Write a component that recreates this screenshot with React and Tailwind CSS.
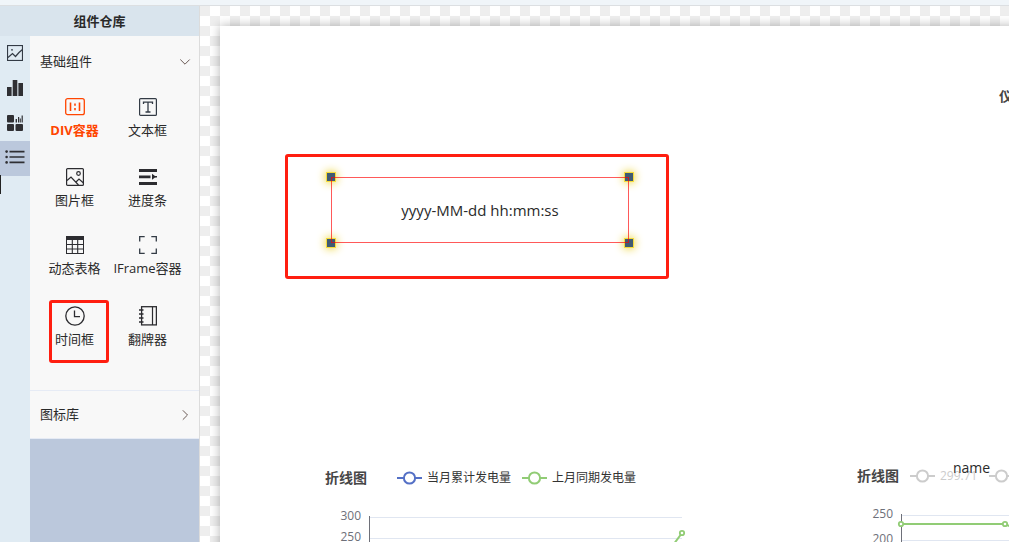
// src/App.jsx
import { useState } from "react";
import clsx from "clsx";

/* ---------- rail icons ---------- */
const PictureIcon = () => (
    <svg width="16" height="16" viewBox="0 0 16 16" fill="none" stroke="#333b45">
        <rect x="0.5" y="0.5" width="15" height="15" strokeWidth="1.2" />
        <circle cx="5" cy="4.8" r="0.9" fill="#333b45" stroke="none" />
        <path d="M1 12.5l4.5-4 3 3 3.5-4 3.5-3" strokeWidth="1.2" />
    </svg>
);

const BarsIcon = () => (
    <svg width="16" height="16" viewBox="0 0 16 16" fill="#2f2f33">
        <rect x="0" y="7" width="4.6" height="9" />
        <rect x="5.7" y="0" width="4.6" height="16" />
        <rect x="11.4" y="3" width="4.6" height="13" />
    </svg>
);

const BlocksIcon = () => (
    <svg width="16" height="16" viewBox="0 0 16 16" fill="#2f2f33">
        <rect x="0" y="0" width="7" height="7.5" rx="1" />
        <rect x="0" y="9" width="7" height="7" rx="1" />
        <rect x="8.5" y="9" width="7.5" height="7" rx="1" />
        <path d="M8.6 4h1.4v3.5H8.6zM11 2h1.2v5.5H11zM12.8 3.4h1v4.1h-1zM14.6 0.6h1.2v6.9h-1.2z" />
    </svg>
);

const ListIcon = () => (
    <svg width="20" height="14" viewBox="0 0 20 14" fill="#2f2f33">
        <circle cx="1.6" cy="1.6" r="1.3" />
        <circle cx="1.6" cy="7" r="1.3" />
        <circle cx="1.6" cy="12.4" r="1.3" />
        <path d="M4.5 0.8h15v1.6h-15zM4.5 6.2h15v1.6h-15zM4.5 11.6h15v1.6h-15z" />
    </svg>
);

/* ---------- component icons ---------- */
const DivIcon = () => (
    <svg width="20" height="18" viewBox="0 0 20 18" fill="none" stroke="#ff4500">
        <rect x="0.7" y="0.7" width="18.6" height="16" rx="2" strokeWidth="1.3" />
        <path d="M5.5 4.5v8.5M14.5 4.5v8.5" strokeWidth="1.6" />
        <path d="M10 5.5v2.2M10 10v2.2" strokeWidth="1.6" />
    </svg>
);

const TextIcon = () => (
    <svg width="18" height="18" viewBox="0 0 18 18" fill="none" stroke="#333b45">
        <rect x="0.6" y="0.6" width="16.8" height="16.8" rx="1" strokeWidth="1.2" />
        <path d="M4.5 6V4.2h9V6M9 4.2v9.6M6.5 14h5" strokeWidth="1.3" />
    </svg>
);

const ImageIcon = () => (
    <svg width="18" height="18" viewBox="0 0 18 18" fill="none" stroke="#2c2c30" strokeWidth="1.2">
        <rect x="0.6" y="0.6" width="16.8" height="16.8" rx="1" />
        <circle cx="12.5" cy="5.5" r="1.8" />
        <path d="M1 12.5l4-3.5 7.5 8M10 14l3-3 4.5 4" />
    </svg>
);

const ProgressIcon = () => (
    <svg width="18" height="16" viewBox="0 0 18 16" fill="#2c2c30">
        <path d="M0 0h18v3H0zM0 6.5h11.5v2.7H0zM0 13h18v3H0zM13 4.8l4 3-4 3z" />
        <path d="M16 7h2v1.6h-2z" />
    </svg>
);

const TableIcon = () => (
    <svg width="18" height="18" viewBox="0 0 18 18" fill="none" stroke="#2c2c30">
        <rect x="0.5" y="0.5" width="17" height="17" />
        <path d="M0 2h18" strokeWidth="4" />
        <path d="M6.3 4v14M11.7 4v14M0 8.5h18M0 13h18" strokeWidth="1.1" />
    </svg>
);

const FrameIcon = () => (
    <svg width="18" height="18" viewBox="0 0 18 18" fill="none" stroke="#333b45" strokeWidth="1.3">
        <path d="M0.7 5.5V0.7h5M12.3 0.7h5v4.8M17.3 12.5v4.8h-5M5.7 17.3h-5v-4.8" />
    </svg>
);

const ClockIcon = () => (
    <svg width="20" height="20" viewBox="0 0 20 20" fill="none" stroke="#2c2c30" strokeWidth="1.3">
        <circle cx="10" cy="10" r="9.2" />
        <path d="M9.5 4.5v6.2h5.5" />
    </svg>
);

const FlipIcon = () => (
    <svg width="18" height="20" viewBox="0 0 18 20" fill="none" stroke="#2c2c30">
        <rect x="2.6" y="0.7" width="14.8" height="18.2" strokeWidth="1.3" />
        <path d="M13.5 1v18" strokeWidth="1.2" />
        <path d="M0 4h4.5M0 8h4.5M0 12h4.5M0 16h4.5" strokeWidth="1.3" />
    </svg>
);

const railItems = [
    { label: "图片", icon: PictureIcon },
    { label: "图表", icon: BarsIcon },
    { label: "布局", icon: BlocksIcon },
    { label: "组件", icon: ListIcon },
];

const widgets = [
    { name: "DIV容器", icon: DivIcon },
    { name: "文本框", icon: TextIcon },
    { name: "图片框", icon: ImageIcon },
    { name: "进度条", icon: ProgressIcon },
    { name: "动态表格", icon: TableIcon },
    { name: "IFrame容器", icon: FrameIcon },
    { name: "时间框", icon: ClockIcon, marked: true },
    { name: "翻牌器", icon: FlipIcon },
];

function Rail() {
    const [current, setCurrent] = useState(3);

    return (
        <nav className="relative w-[30px] shrink-0 bg-[#e0ebf3]">
            {railItems.map((item, i) => (
                <button
                    key={item.label}
                    aria-label={item.label}
                    onClick={() => setCurrent(i)}
                    className={clsx(
                        "flex h-[35px] w-full items-center justify-center",
                        current === i ? "bg-[#bbc8dc] pb-1" : "pb-0.5"
                    )}
                >
                    <item.icon />
                </button>
            ))}
            <div className="absolute left-0 top-[139px] h-[19px] w-px bg-[#222]" />
        </nav>
    );
}

function SectionHeader({ title, open, onClick }) {
    return (
        <button
            onClick={onClick}
            aria-expanded={open}
            className="flex h-[47px] w-full items-center justify-between pl-[10px] pr-2 text-[13px]"
        >
            <span>{title}</span>
            <svg width="12" height="12" viewBox="0 0 12 12" fill="none" stroke="#6b5a55" strokeWidth="1">
                <path d={open ? "M1.3 3.5l4.7 4.7 4.7-4.7" : "M3.8 1.3l4.7 4.7-4.7 4.7"} />
            </svg>
        </button>
    );
}

function Sidebar() {
    const [active, setActive] = useState("DIV容器");
    const [open, setOpen] = useState(true);

    return (
        <aside className="flex w-[200px] shrink-0 flex-col border-r border-[#dcdcdc]">
            <h1 className="flex h-[30px] items-center justify-center bg-[#d9e4ed] pt-0.5 text-[13px] font-bold">
                组件仓库
            </h1>
            <div className="flex flex-1">
                <Rail />
                <div className="flex-1 bg-[#bbc8dc]">
                    <section className="border-b border-[#e6ebf5] bg-[#f8f8f8] pt-0.5">
                        <SectionHeader title="基础组件" open={open} onClick={() => setOpen(!open)} />
                        {open && (
                            <div className="grid grid-cols-[73px_73px] grid-rows-[70px_68px_71px_60px] pb-6 pl-2 pt-3">
                                {widgets.map((w) => (
                                    <button
                                        key={w.name}
                                        onClick={() => setActive(w.name)}
                                        className={clsx(
                                            "relative flex flex-col items-center self-start whitespace-nowrap text-[13px] leading-5",
                                            active === w.name && "font-bold text-[#ff4500]"
                                        )}
                                    >
                                        <span className="flex h-5 items-center">
                                            <w.icon />
                                        </span>
                                        <span className="mt-[3px]">{w.name}</span>
                                        {w.marked && (
                                            <span className="absolute -top-[6px] left-[11px] h-[63px] w-[60px] rounded-[3px] border-3 border-[#ff1e10]" />
                                        )}
                                    </button>
                                ))}
                            </div>
                        )}
                    </section>
                    <section className="border-b border-[#e6ebf5] bg-[#f8f8f8]">
                        <SectionHeader title="图标库" open={false} />
                    </section>
                </div>
            </div>
        </aside>
    );
}

function TimeBox() {
    const handle =
        "absolute size-[10px] border border-[#f5dc3c] bg-[#3f5b73] shadow-[0_0_10px_#e6c800]";

    return (
        <div className="absolute left-[65px] top-[128px] h-[125px] w-[384px] rounded-[3px] border-3 border-[#ff1e10]">
            <div className="absolute left-[43px] top-5 h-[66px] w-[298px]">
                <span className={clsx(handle, "-left-[5px] -top-[5px]")} />
                <span className={clsx(handle, "-right-[5px] -top-[5px]")} />
                <span className={clsx(handle, "-bottom-[5px] -left-[5px]")} />
                <span className={clsx(handle, "-bottom-[5px] -right-[5px]")} />
                <div className="relative flex h-full items-center justify-center border border-[#ff0000]/65 text-[15px]">
                    yyyy-MM-dd hh:mm:ss
                </div>
            </div>
        </div>
    );
}

function LegendItem({ color, children }) {
    return (
        <span className="flex items-center gap-[5px]">
            <svg width="25" height="14" viewBox="0 0 25 14" fill="#fff" stroke={color} strokeWidth="2">
                <path d="M0 7h25" />
                <circle cx="12.5" cy="7" r="5.6" />
            </svg>
            {children}
        </span>
    );
}

function Plot({ ticks, step, width, color, points }) {
    return (
        <div className="mt-[18px] flex">
            <div className="w-9 shrink-0 text-right text-xs leading-5 text-[#6e7079]">
                {ticks.map((t) => (
                    <div key={t} style={{ height: step }}>
                        {t}
                    </div>
                ))}
            </div>
            <svg
                className="ml-1 mt-[6px] shrink-0"
                width={width + 10}
                height="200"
                viewBox={`-4 -4 ${width + 10} 200`}
                fill="none"
            >
                {ticks.map((t, i) => (
                    <path key={t} d={`M0 ${i * step + 1.5}h${width}`} stroke="#e0e6f1" />
                ))}
                <path d="M0.5 0v196" stroke="#6e7079" />
                <polyline points={points.map((p) => p.join(",")).join(" ")} stroke={color} strokeWidth="2" />
                {points.map(([x, y]) => (
                    <circle key={x} cx={x} cy={y} r="2.2" fill="#fff" stroke={color} strokeWidth="1.8" />
                ))}
            </svg>
        </div>
    );
}

export default function App() {
    return (
        <div className="flex h-screen flex-col overflow-hidden bg-[#f0f4f8] font-['Open_Sans','Noto_Sans_CJK_SC',sans-serif] text-[#2a2a2a]">
            <header className="h-[6px] shrink-0 border-b border-[#dcdfe2] bg-[#f0f5f9]" />
            <div className="flex min-h-0 flex-1">
                <Sidebar />

                {/* Canvas */}
                <main className="min-w-0 flex-1 overflow-hidden bg-[repeating-conic-gradient(#ffffff_0_25%,#eeeeee_0_50%)] bg-size-[20px_20px] pl-5 pt-5">
                    <div className="relative h-[1080px] w-[1920px] bg-white shadow-[0_0_10px_rgba(0,0,0,0.3)]">
                        <h2 className="absolute left-[779px] top-[60px] text-sm font-bold text-[#464646]">仪表盘</h2>

                        <TimeBox />

                        <div className="absolute left-[105px] top-[442px]">
                            <div className="flex h-5 items-center text-xs text-[#333]">
                                <h2 className="w-[72px] text-sm font-bold text-[#464646]">折线图</h2>
                                <div className="flex gap-[11px]">
                                    <LegendItem color="#5470c6">当月累计发电量</LegendItem>
                                    <LegendItem color="#91cc75">上月同期发电量</LegendItem>
                                </div>
                            </div>
                            <Plot
                                ticks={[300, 250, 200]}
                                step={21}
                                width={313}
                                color="#91cc75"
                                points={[[270, 75], [313, 17]]}
                            />
                        </div>

                        <div className="absolute left-[637px] top-[440px]">
                            <div className="flex h-5 items-center text-xs text-[#ccc]">
                                <h2 className="w-[53px] text-sm font-bold text-[#464646]">折线图</h2>
                                <div className="flex gap-3">
                                    <LegendItem color="#ccc">299.71</LegendItem>
                                    <LegendItem color="#ccc">299.72</LegendItem>
                                </div>
                            </div>
                            <Plot
                                ticks={[250, 200, 150]}
                                step={25}
                                width={313}
                                color="#91cc75"
                                points={[[0, 10], [104, 10], [208, 60]]}
                            />
                        </div>

                        <span className="absolute left-[733px] top-[432px] text-sm">name</span>
                    </div>
                </main>
            </div>
        </div>
    );
}
